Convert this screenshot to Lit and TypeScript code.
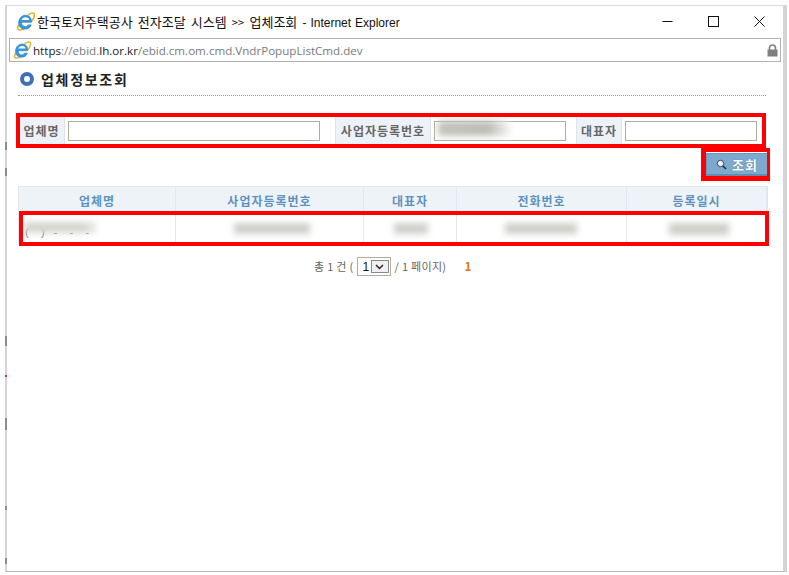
import { LitElement, html, css } from "lit";
import { customElement } from "lit/decorators.js";

const ieIcon = (size: number) => html`<svg class="ie" width=${size} height=${size} viewBox="0 0 20 20">
  <path d="M2.6 14.2C0.4 18.2 2.6 20 7.4 18.2M13.4 2.6C16.6 0.4 19.8 0.4 19.4 3.6C19.2 5.4 18 7.6 16.6 9.4" fill="none" stroke="#e6b32a" stroke-width="1.7" stroke-linecap="round"/>
  <path d="M4.6 10.8H16.2C16.6 6.4 14 3.4 10.2 3.4C6.2 3.4 3 6.8 2.8 11C2.6 15.4 5.6 18 9.6 18C12.6 18 15 16.4 16 13.6H12.6C12 14.8 11 15.4 9.8 15.4C7.8 15.4 6 14 5.6 10.8" fill="#3b97dc" stroke="#2a86d0" stroke-width="0.8"/>
  <path d="M6 8.4C6.4 6.6 8 5.6 10.2 5.6C12.2 5.6 13.8 6.8 13.9 8.4Z" fill="#fff"/>
</svg>`;

@customElement("app-root")
export class AppRoot extends LitElement {
  static styles = css`
    :host {
      display: block;
      position: relative;
      width: 789px;
      height: 575px;
      background: #fff;
      overflow: hidden;
      font-family: "Noto Sans CJK KR", "Liberation Sans", sans-serif;
      font-size: 12px;
    }
    .window {
      box-sizing: border-box;
      margin: 5px 0 0 5px;
      width: 782px;
      height: 567px;
      border-top: 1px solid #d9d9d9;
      border-left: 2px solid #d2d6da;
      border-right: 4px solid #d4d4d4;
      border-bottom: 1px solid #bcbcbc;
      background: #fff;
      display: flex;
      flex-direction: column;
    }
    .titlebar {
      height: 32px;
      flex: none;
      display: flex;
      align-items: center;
      padding: 0 0 2px 9px;
      gap: 2px;
      box-sizing: border-box;
    }
    .title {
      font-size: 13px;
      word-spacing: 2.2px;
      color: #111;
      white-space: nowrap;
      flex: 1;
    }
    .title .sep { font-size: 11px; letter-spacing: 0.2px; }
    .title .en { font-family: "Liberation Sans", sans-serif; font-size: 12px; word-spacing: 0.6px; }
    .winbtns { display: flex; margin-right: 1px; }
    .winbtn { width: 46px; height: 24px; display: flex; align-items: center; justify-content: center; }
    .address {
      flex: none;
      box-sizing: border-box;
      height: 24px;
      margin: 0 2px 0 2px;
      border: 1px solid #b2b2b2;
      display: flex;
      align-items: center;
      padding: 0 2px 0 3px;
      gap: 2px;
      font-family: "Open Sans", sans-serif;
      font-size: 11.6px;
      color: #7a7a7a;
    }
    .url { flex: 1; white-space: nowrap; }
    .url b { font-weight: 400; color: #222; }
    .content { flex: 1; padding: 0 15px 0 11px; display: flex; flex-direction: column; }
    .heading {
      height: 34px;
      box-sizing: border-box;
      margin-right: 2px;
      display: flex;
      align-items: center;
      gap: 7px;
      padding: 2px 0 2px 2px;
      border-bottom: 1px dotted #7f9db8;
      font-size: 14px;
      letter-spacing: 1.7px;
      font-weight: 700;
      color: #222;
    }
    .bullet {
      box-sizing: border-box;
      width: 14px;
      height: 14px;
      border-radius: 50%;
      border: 4px solid #3f6fb5;
      background: #fff;
    }
    .search {
      margin: 20px 0 0 1px;
      width: 749px;
      height: 29px;
      box-sizing: border-box;
      display: grid;
      grid-template-columns: 45px 270px 94px 145px 44px 146px;
      gap: 1px;
      padding-right: 1px;
      background: #dfe3ea;
    }
    .lab {
      background: #edf1f8;
      color: #666;
      font-weight: 700;
      letter-spacing: 1px;
      display: flex;
      align-items: center;
      justify-content: center;
      white-space: nowrap;
    }
    .val { background: #fff; display: flex; align-items: center; padding-left: 3px; position: relative; }
    .input {
      box-sizing: border-box;
      height: 20px;
      border: 1px solid #aeae9c;
      background: #fff;
    }
    .i1 { width: 252px; } .i2 { width: 132px; } .i3 { width: 132px; }
    .smudge {
      position: absolute;
      background: #cfcfca;
      filter: blur(3px);
    }
    .s-input {
      left: 7px;
      top: 5px;
      width: 72px;
      height: 15px;
      background: linear-gradient(90deg, #c4c4be, #bdbdb6 70%, #f4f4f4);
    }
    .actions { display: flex; justify-content: flex-end; margin-top: 8px; height: 33px; }
    .btn {
      box-sizing: border-box;
      width: 62px;
      height: 23px;
      background: #7ca9cd;
      border: 1px solid #6b98bd;
      border-bottom: 2px solid #5f8db3;
      color: #fff;
      font-weight: 700;
      font-size: 13px;
      letter-spacing: 1px;
      display: flex;
      align-items: center;
      justify-content: center;
      gap: 5px;
      text-shadow: 0 0 1px #3e6a8e;
    }
    .grid {
      box-sizing: border-box;
      width: 750px;
      border: 1px solid #e2e7ed;
      border-bottom: 1px solid #e6e6e6;
      display: grid;
      grid-template-columns: 157px 188px 93px 170px 1fr;
    }
    .th {
      height: 25px;
      background: #eef3f8;
      color: #5d92c0;
      font-weight: 700;
      letter-spacing: 1px;
      display: flex;
      align-items: center;
      justify-content: center;
      border-right: 1px solid #e2e7ed;
      padding-top: 1px;
      box-sizing: border-box;
    }
    .td {
      height: 31px;
      position: relative;
      border-right: 1px solid #e8ebee;
      border-top: 1px solid #e2e7ed;
      box-sizing: border-box;
    }
    .th:last-child, .td:last-child { border-right: none; }
    .frag {
      position: absolute;
      left: 6px;
      top: 13px;
      font-size: 11px;
      color: #777;
      white-space: pre;
      font-family: "Liberation Sans", sans-serif;
    }
    .d1 { left: 6px; top: 9px; width: 72px; height: 11px; background: linear-gradient(90deg, #d4d4cf, #d4d4cf 80%, #eee); }
    .d2 { left: 58px; top: 10px; width: 76px; height: 11px; }
    .d3 { left: 30px; top: 10px; width: 34px; height: 11px; }
    .d4 { left: 48px; top: 10px; width: 72px; height: 11px; }
    .d5 { left: 42px; top: 10px; width: 60px; height: 12px; }
    .pager {
      margin: 13px 0 0 296px;
      display: flex;
      align-items: center;
      height: 19px;
      color: #666;
      font-size: 11px;
      white-space: nowrap;
    }
    .txt { position: relative; top: -1px; letter-spacing: 0.3px; }
    .select {
      box-sizing: border-box;
      width: 34px;
      height: 19px;
      border: 1px solid #aeae9c;
      margin: 0 4px 0 3px;
      display: flex;
      align-items: center;
      justify-content: space-between;
      padding: 0 1px 0 5px;
      font-size: 12px;
      color: #111;
      font-family: "Liberation Sans", sans-serif;
    }
    .arrow {
      box-sizing: border-box;
      width: 18px;
      height: 13px;
      border: 1px solid #8a8a8a;
      background: #f0f0f0;
      display: flex;
      align-items: center;
      justify-content: center;
    }
    .page { margin-left: 18px; color: #e07b12; font-weight: 700; font-size: 12px; }
    .mark { position: absolute; border: 4px solid #f00; box-sizing: border-box; pointer-events: none; }
    .m1 { left: 16px; top: 113px; width: 750px; height: 35px; }
    .m2 { left: 701px; top: 148px; width: 69px; height: 33px; border-width: 4px 3px 5px 5px; }
    .m3 { left: 19px; top: 211px; width: 750px; height: 35px; }
    .speck { position: absolute; left: 5px; width: 2px; background: #8d8d86; }
    .sp1 { top: 142px; height: 8px; } .sp2 { top: 168px; height: 8px; } .sp3 { top: 336px; height: 10px; }
    .sp4 { top: 418px; height: 12px; } .sp5 { top: 506px; height: 4px; } .sp6 { top: 558px; height: 6px; }
    .sp-red { top: 375px; height: 2px; background: #c33; }
  `;

  render() {
    return html`
      <div class="window">
        <div class="titlebar">
          ${ieIcon(19)}
          <div class="title">한국토지주택공사 전자조달 시스템 <span class="sep">&gt;&gt;</span> 업체조회 <span class="en">- Internet Explorer</span></div>
          <div class="winbtns">
            <div class="winbtn"><svg width="11" height="11" viewBox="0 0 11 11"><path d="M0.5 5.5H10.5" stroke="#111" fill="none"/></svg></div>
            <div class="winbtn"><svg width="11" height="11" viewBox="0 0 11 11"><rect x="0.5" y="0.5" width="10" height="10" stroke="#111" fill="none"/></svg></div>
            <div class="winbtn"><svg width="11" height="11" viewBox="0 0 11 11"><path d="M0.5 0.5L10.5 10.5M10.5 0.5L0.5 10.5" stroke="#111" fill="none"/></svg></div>
          </div>
        </div>
        <div class="address">
          ${ieIcon(18)}
          <div class="url"><b>https</b>://ebid.<b>lh.or.kr</b>/ebid.cm.om.cmd.VndrPopupListCmd.dev</div>
          <svg width="11" height="13" viewBox="0 0 11 13">
            <path d="M2.5 6V4a3 3 0 0 1 6 0V6" fill="none" stroke="#808080" stroke-width="1.6"/>
            <rect x="0.5" y="5.5" width="10" height="7" fill="#808080"/>
          </svg>
        </div>
        <div class="content">
          <div class="heading"><span class="bullet"></span>업체정보조회</div>
          <div class="search">
            <div class="lab">업체명</div>
            <div class="val"><div class="input i1"></div></div>
            <div class="lab">사업자등록번호</div>
            <div class="val"><div class="input i2"></div><div class="smudge s-input"></div></div>
            <div class="lab">대표자</div>
            <div class="val"><div class="input i3"></div></div>
          </div>
          <div class="actions">
            <div class="btn">
              <svg width="11" height="11" viewBox="0 0 11 11">
                <circle cx="4.5" cy="4.5" r="3.2" fill="#f2f7fa" stroke="#33424f" stroke-width="1"/>
                <path d="M7 7L10 10" stroke="#22303a" stroke-width="1.6"/>
              </svg>
              조회
            </div>
          </div>
          <div class="grid">
            <div class="th">업체명</div>
            <div class="th">사업자등록번호</div>
            <div class="th">대표자</div>
            <div class="th">전화번호</div>
            <div class="th">등록일시</div>
            <div class="td"><span class="frag">(    )   -    -    -</span><div class="smudge d1"></div></div>
            <div class="td"><div class="smudge d2"></div></div>
            <div class="td"><div class="smudge d3"></div></div>
            <div class="td"><div class="smudge d4"></div></div>
            <div class="td"><div class="smudge d5"></div></div>
          </div>
          <div class="pager">
            <span class="txt">총 1 건 (</span>
            <div class="select">1<span class="arrow"><svg width="9" height="6" viewBox="0 0 9 6"><path d="M1 1L4.5 4.5L8 1" fill="none" stroke="#222" stroke-width="1.5"/></svg></span></div>
            <span class="txt">/ 1 페이지)</span>
            <span class="page txt">1</span>
          </div>
        </div>
      </div>
      <div class="mark m1"></div>
      <div class="mark m2"></div>
      <div class="mark m3"></div>
      <div class="speck sp1"></div><div class="speck sp2"></div><div class="speck sp3"></div>
      <div class="speck sp-red"></div>
      <div class="speck sp4"></div><div class="speck sp5"></div><div class="speck sp6"></div>
    `;
  }
}
